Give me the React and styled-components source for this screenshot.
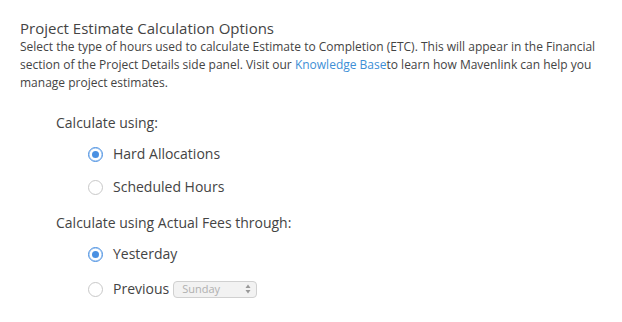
import React from "react";
import styled, { createGlobalStyle } from "styled-components";

const Global = createGlobalStyle`
  html, body { margin: 0; padding: 0; background: #fff; }
  body { font-family: "Open Sans", "Liberation Sans", sans-serif; color: #444; }
`;

const Page = styled.div`
  padding: 18px 20px 0 20px;
`;

const Title = styled.h2`
  margin: 0;
  font-size: 15px;
  font-weight: 400;
  line-height: 20px;
  color: #444;
`;

const Desc = styled.p`
  margin: 0;
  font-size: 12px;
  line-height: 18px;
  color: #444;
`;

const Link = styled.a`
  color: #3d8fd6;
  text-decoration: none;
`;

const Section = styled.div`
  padding-left: 36px;
  margin-top: ${(p) => p.$top}px;
`;

const Label = styled.div`
  font-size: 14px;
  line-height: 20px;
  color: #444;
`;

const Options = styled.div`
  padding-left: 32px;
  display: flex;
  flex-direction: column;
  gap: ${(p) => p.$gap}px;
  margin-top: ${(p) => p.$top}px;
`;

const Option = styled.label`
  display: flex;
  align-items: center;
  gap: 10px;
  font-size: 14px;
  line-height: 20px;
  color: #444;
`;

const Radio = styled.span`
  width: 15px;
  height: 15px;
  border-radius: 50%;
  box-sizing: border-box;
  border: 1px solid ${(p) => (p.$checked ? "#4a90e2" : "#c8c8c8")};
  box-shadow: ${(p) => (p.$checked ? "inset 0 0 0 0.5px #8bb8ec" : "none")};
  display: flex;
  align-items: center;
  justify-content: center;
  background: #fff;
  &::after {
    content: "";
    width: 7px;
    height: 7px;
    border-radius: 50%;
    background: #4a90e2;
    display: ${(p) => (p.$checked ? "block" : "none")};
  }
`;

const Select = styled.span`
  display: inline-flex;
  align-items: center;
  justify-content: space-between;
  box-sizing: border-box;
  width: 84px;
  height: 17px;
  margin-left: -6px;
  padding: 0 5px 0 8px;
  border: 1px solid #d0d0d0;
  border-radius: 4px;
  background: #f2f2f2;
  color: #b0b0b0;
  font-size: 11px;
`;

const Arrows = styled.svg`
  width: 6px;
  height: 10px;
`;

export default function App() {
  return (
    <>
      <Global />
      <Page>
        <Title>Project Estimate Calculation Options</Title>
        <Desc>
          Select the type of hours used to calculate Estimate to Completion (ETC). This will appear in the Financial
          section of the Project Details side panel. Visit our <Link href="#">Knowledge Base</Link>to learn how Mavenlink can help you
          manage project estimates.
        </Desc>
        <Section $top={21}>
          <Label>Calculate using:</Label>
          <Options $top={11} $gap={13}>
            <Option><Radio $checked />Hard Allocations</Option>
            <Option><Radio />Scheduled Hours</Option>
          </Options>
        </Section>
        <Section $top={16}>
          <Label>Calculate using Actual Fees through:</Label>
          <Options $top={11} $gap={15}>
            <Option><Radio $checked />Yesterday</Option>
            <Option>
              <Radio />Previous
              <Select>
                Sunday
                <Arrows viewBox="0 0 6 10">
                  <path d="M3 0.5 L5.5 4 H0.5 Z" fill="#999" />
                  <path d="M3 9.5 L5.5 6 H0.5 Z" fill="#999" />
                </Arrows>
              </Select>
            </Option>
          </Options>
        </Section>
      </Page>
    </>
  );
}
